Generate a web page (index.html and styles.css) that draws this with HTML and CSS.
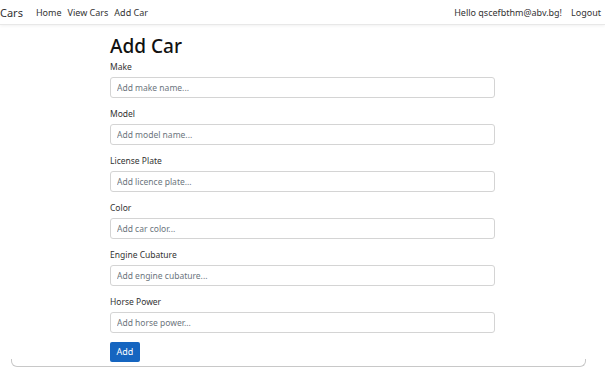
FILE: index.html
```html
<!DOCTYPE html>
<html>
<head>
<meta charset="utf-8">
<link rel="stylesheet" href="styles.css">
</head>
<body>
<header class="navbar">
  <nav class="nav-left">
    <a class="brand" href="#">Cars</a>
    <a class="nav-link" href="#">Home</a>
    <a class="nav-link" href="#">View Cars</a>
    <a class="nav-link" href="#">Add Car</a>
  </nav>
  <nav class="nav-right">
    <span class="nav-link">Hello qscefbthm@abv.bg!</span>
    <a class="nav-link" href="#">Logout</a>
  </nav>
</header>
<main class="main">
  <form class="form">
    <h1 class="title">Add Car</h1>
    <div class="group"><label class="label">Make</label><input class="input" placeholder="Add make name..."></div>
    <div class="group"><label class="label">Model</label><input class="input" placeholder="Add model name..."></div>
    <div class="group"><label class="label">License Plate</label><input class="input" placeholder="Add licence plate..."></div>
    <div class="group"><label class="label">Color</label><input class="input" placeholder="Add car color..."></div>
    <div class="group"><label class="label">Engine Cubature</label><input class="input" placeholder="Add engine cubature..."></div>
    <div class="group"><label class="label">Horse Power</label><input class="input" placeholder="Add horse power..."></div>
    <button class="btn" type="button">Add</button>
  </form>
  <div class="frame-bottom"></div>
</main>
</body>
</html>
```
FILE: styles.css
```css
* { box-sizing: border-box; }
html, body { margin: 0; padding: 0; background: #fff; }
body { font-family: "Noto Sans", "Open Sans", sans-serif; color: #212529; width: 605px; height: 369px; overflow: hidden; }
.navbar {
  height: 25px;
  display: flex;
  justify-content: space-between;
  align-items: center;
  border-bottom: 1px solid #e8e8e8;
  box-shadow: 0 1px 3px rgba(0,0,0,0.06);
}
.nav-left, .nav-right { display: flex; align-items: center; }
.brand { font-size: 11px; color: #333; text-decoration: none; margin-right: 13px; }
.nav-link { font-size: 9px; color: #333; text-decoration: none; margin-right: 6px; }
.nav-right .nav-link { margin-right: 0; margin-left: 9px; }
.nav-right { padding-right: 4px; }
.main { display: flex; flex-direction: column; align-items: center; }
.form { width: 385px; padding-top: 10px; }
.title { font-size: 19px; font-weight: 500; margin: 0 0 4px 0; line-height: 22px; color: #111; }
.group { display: flex; flex-direction: column; margin-bottom: 5px; }
.label { font-size: 8.5px; color: #333; line-height: 12px; margin-bottom: 4px; }
.input {
  width: 100%;
  height: 21px;
  border: 1px solid #d4d4d4;
  border-radius: 3px;
  padding: 0 6px;
  font-family: inherit;
  font-size: 8.5px;
  margin-bottom: 0;
}
.input::placeholder { color: #6c757d; }
.group + .group { margin-top: 10px; }
.btn {
  margin-top: 2px;
  width: 30px;
  height: 20px;
  background: #1565c0;
  color: #fff;
  border: none;
  border-radius: 2px;
  font-family: inherit;
  font-size: 9px;
  padding: 0;
}
.frame-bottom {
  width: 575px;
  height: 8px;
  border: 1px solid #c8c8c8;
  border-top: none;
  border-radius: 0 0 6px 6px;
  margin-top: -3px;
  margin-right: 8px;
}
```
